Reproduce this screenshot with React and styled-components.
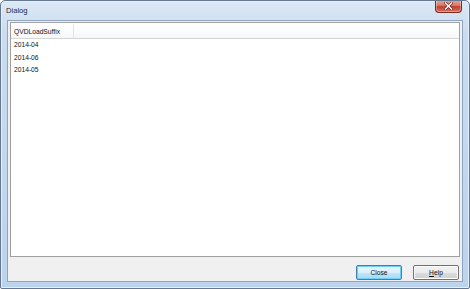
import React from "react";
import styled, { createGlobalStyle } from "styled-components";

const Global = createGlobalStyle`
  html, body {
    margin: 0;
    padding: 0;
    background: #ffffff;
  }
  body {
    font-family: "Liberation Sans", Arial, sans-serif;
  }
`;

const Window = styled.div`
  box-sizing: border-box;
  width: 470px;
  height: 289px;
  display: flex;
  flex-direction: column;
  border: 1px solid #65788f;
  border-radius: 5px 5px 2px 2px;
  background: linear-gradient(180deg, #dce8f5 0%, #c9dcf0 12%, #bcd3ed 100%);
  box-shadow: inset 0 0 0 1px #e6eef8;
  overflow: hidden;
`;

const TitleBar = styled.div`
  height: 19px;
  display: flex;
  align-items: flex-start;
  justify-content: space-between;
  padding-left: 5px;
  padding-right: 7px;
`;

const Title = styled.div`
  font-size: 7.6px;
  color: #1e2a3a;
  line-height: 19px;
`;

const CloseX = styled.div`
  box-sizing: border-box;
  width: 27px;
  height: 13px;
  margin-top: -1px;
  display: flex;
  align-items: center;
  justify-content: center;
  border: 1px solid #7a2a22;
  border-top: none;
  border-radius: 0 0 4px 4px;
  background: linear-gradient(180deg, #e8a89c 0%, #d87a6a 45%, #c2402e 55%, #d6715c 100%);
  box-shadow: inset 0 0 0 1px rgba(255, 255, 255, 0.35);
`;

const Client = styled.div`
  flex: 1;
  margin: 0 6px 6px 6px;
  display: flex;
  flex-direction: column;
  background: #f0f0f0;
  border: 1px solid #8ea4c1;
  padding: 1px 2px 1px 2px;
`;

const Table = styled.div`
  flex: 1;
  background: #ffffff;
  border: 1px solid #a0a0a0;
  display: flex;
  flex-direction: column;
  font-size: 6.7px;
  color: #111111;
`;

const Header = styled.div`
  height: 14px;
  margin-top: 1px;
  display: flex;
  background: linear-gradient(180deg, #ffffff 0%, #f6f7f9 100%);
  border-bottom: 1px solid #d5d5d5;
`;

const HeaderCell = styled.div`
  width: ${(p) => p.$w}px;
  box-sizing: border-box;
  padding-left: 3px;
  line-height: 15px;
  border-right: 1px solid #e3e3e3;
`;

const Row = styled.div`
  height: 12.5px;
  line-height: 12.5px;
  padding-left: 3px;
`;

const Footer = styled.div`
  display: flex;
  justify-content: flex-end;
  gap: 11px;
  padding: 8px 1px 0 0;
  height: 15px;
`;

const Button = styled.div`
  box-sizing: border-box;
  width: 46px;
  height: 15px;
  display: flex;
  align-items: center;
  justify-content: center;
  font-size: 6.7px;
  color: #111;
  border-radius: 2px;
  border: 1px solid ${(p) => (p.$default ? "#3c7fb1" : "#707070")};
  background: ${(p) =>
    p.$default
      ? "linear-gradient(180deg, #eaf6fd 0%, #d9f0fc 50%, #bee6fd 51%, #a7d9f5 100%)"
      : "linear-gradient(180deg, #f2f2f2 0%, #ebebeb 50%, #dddddd 51%, #cfcfcf 100%)"};
  box-shadow: ${(p) => (p.$default ? "inset 0 0 0 1px #6ccff7" : "inset 0 0 0 1px #fcfcfc")};
`;

const rows = ["2014-04", "2014-06", "2014-05"];

export default function App() {
  return (
    <>
      <Global />
      <Window>
        <TitleBar>
          <Title>Dialog</Title>
          <CloseX>
            <svg width="9" height="8" viewBox="0 0 9 8">
              <path d="M1.5 1 L7.5 7 M7.5 1 L1.5 7" stroke="#5a1a14" strokeWidth="2.6" strokeLinecap="square" />
              <path d="M1.5 1 L7.5 7 M7.5 1 L1.5 7" stroke="#ffffff" strokeWidth="1.5" strokeLinecap="square" />
            </svg>
          </CloseX>
        </TitleBar>
        <Client>
          <Table>
            <Header>
              <HeaderCell $w={63}>QVDLoadSuffix</HeaderCell>
            </Header>
            {rows.map((r, i) => (
              <Row key={i}>{r}</Row>
            ))}
          </Table>
          <Footer>
            <Button $default>Close</Button>
            <Button>
              <span>
                <u>H</u>elp
              </span>
            </Button>
          </Footer>
        </Client>
      </Window>
    </>
  );
}
